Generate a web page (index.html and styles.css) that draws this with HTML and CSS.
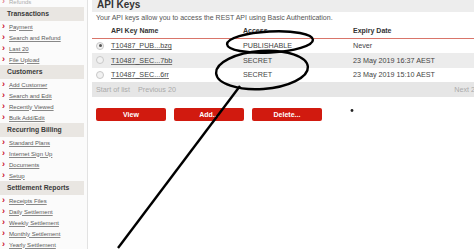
FILE: index.html
```html
<!DOCTYPE html>
<html>
<head>
<meta charset="utf-8">
<link rel="stylesheet" href="styles.css">
</head>
<body>
<div class="page">
  <aside class="sidebar">
    <div class="side-cut"><a class="side-link"><span class="chev">›</span>Refunds</a></div>
    <div class="side-head">Transactions</div>
    <a class="side-link"><span class="chev">›</span><u>Payment</u></a>
    <a class="side-link"><span class="chev">›</span><u>Search and Refund</u></a>
    <a class="side-link"><span class="chev">›</span><u>Last 20</u></a>
    <a class="side-link"><span class="chev">›</span><u>File Upload</u></a>
    <div class="side-head">Customers</div>
    <a class="side-link"><span class="chev">›</span><u>Add Customer</u></a>
    <a class="side-link"><span class="chev">›</span><u>Search and Edit</u></a>
    <a class="side-link"><span class="chev">›</span><u>Recently Viewed</u></a>
    <a class="side-link"><span class="chev">›</span><u>Bulk Add/Edit</u></a>
    <div class="side-head">Recurring Billing</div>
    <a class="side-link"><span class="chev">›</span><u>Standard Plans</u></a>
    <a class="side-link"><span class="chev">›</span><u>Internet Sign Up</u></a>
    <a class="side-link"><span class="chev">›</span><u>Documents</u></a>
    <a class="side-link"><span class="chev">›</span><u>Setup</u></a>
    <div class="side-head">Settlement Reports</div>
    <a class="side-link"><span class="chev">›</span><u>Receipts Files</u></a>
    <a class="side-link"><span class="chev">›</span><u>Daily Settlement</u></a>
    <a class="side-link"><span class="chev">›</span><u>Weekly Settlement</u></a>
    <a class="side-link"><span class="chev">›</span><u>Monthly Settlement</u></a>
    <a class="side-link"><span class="chev">›</span><u>Yearly Settlement</u></a>
  </aside>
  <main class="main">
    <h1 class="title">API Keys</h1>
    <p class="desc">Your API keys allow you to access the REST API using Basic Authentication.</p>
    <div class="table">
      <div class="row head">
        <span class="c-radio"></span>
        <span class="c-name">API Key Name</span>
        <span class="c-access">Access</span>
        <span class="c-exp">Expiry Date</span>
      </div>
      <div class="row">
        <span class="c-radio"><span class="radio on"></span></span>
        <span class="c-name"><u>T10487_PUB...bzg</u></span>
        <span class="c-access">PUBLISHABLE</span>
        <span class="c-exp">Never</span>
      </div>
      <div class="row alt">
        <span class="c-radio"><span class="radio"></span></span>
        <span class="c-name"><u>T10487_SEC...7bb</u></span>
        <span class="c-access">SECRET</span>
        <span class="c-exp">23 May 2019 16:37 AEST</span>
      </div>
      <div class="row">
        <span class="c-radio"><span class="radio"></span></span>
        <span class="c-name"><u>T10487_SEC...6rr</u></span>
        <span class="c-access">SECRET</span>
        <span class="c-exp">23 May 2019 15:10 AEST</span>
      </div>
      <div class="pager">
        <span class="pg-left"><span>Start of list</span><span>Previous 20</span></span>
        <span>Next 20</span>
      </div>
    </div>
    <div class="buttons">
      <button class="btn">View</button>
      <button class="btn">Add...</button>
      <button class="btn">Delete...</button>
    </div>
  </main>
</div>
<svg class="marks" width="474" height="249" viewBox="0 0 474 249">
  <ellipse cx="270" cy="42" rx="43" ry="10.5" fill="none" stroke="#000" stroke-width="2.4" transform="rotate(-3 270 42)"/>
  <ellipse cx="262" cy="70" rx="46" ry="19" fill="none" stroke="#000" stroke-width="2.4" transform="rotate(-4 262 70)"/>
  <line x1="240" y1="86" x2="118" y2="248" stroke="#000" stroke-width="2.4"/>
  <circle cx="352" cy="110.5" r="1.4" fill="#222"/>
</svg>
</body>
</html>
```
FILE: styles.css
```css
html, body {
  margin: 0;
  padding: 0;
  background: #fff;
  overflow: hidden;
}
body {
  width: 474px;
  height: 249px;
  position: relative;
  font-family: "Liberation Sans", Arial, sans-serif;
  color: #444;
}
.page {
  display: flex;
  width: 483px;
}
.sidebar {
  width: 88px;
  flex: none;
  background: #fbfbfb;
  border-right: 1px solid #e2e2e2;
  display: flex;
  flex-direction: column;
  padding-right: 3px;
  box-sizing: border-box;
}
.side-cut {
  height: 7px;
  overflow: hidden;
  display: flex;
  align-items: flex-end;
  opacity: 0.5;
}
.side-head {
  height: 14px;
  line-height: 14px;
  background: #e9e6e2;
  font-weight: bold;
  font-size: 6.8px;
  color: #3a3a3a;
  padding-left: 7px;
}
.side-link {
  display: flex;
  align-items: center;
  height: 11px;
  font-size: 6px;
  color: #5a5a5a;
  white-space: nowrap;
}
.side-link u {
  text-decoration-color: #888;
}
.chev {
  width: 9px;
  flex: none;
  text-align: left;
  padding-left: 2px;
  box-sizing: border-box;
  color: #c8102e;
  font-weight: bold;
  font-size: 9px;
  line-height: 11px;
}
.main {
  flex: 1;
  margin-left: 4px;
  display: flex;
  flex-direction: column;
}
.title {
  margin: 0;
  height: 12px;
  box-sizing: border-box;
  background: #ededed;
  font-size: 10px;
  line-height: 9px;
  font-weight: bold;
  color: #333;
  padding-left: 5px;
}
.desc {
  margin: 0;
  height: 12px;
  line-height: 12px;
  font-size: 7px;
  color: #555;
  padding-left: 4px;
  white-space: nowrap;
}
.table {
  display: flex;
  flex-direction: column;
}
.row {
  display: grid;
  grid-template-columns: 19px 132px 110px 1fr;
  align-items: center;
  height: 14.5px;
  font-size: 7.2px;
  color: #444;
  white-space: nowrap;
}
.row.head {
  height: 13.5px;
  border-bottom: 1px solid #d9756a;
  font-weight: bold;
  font-size: 7px;
  color: #333;
}
.row.alt {
  background: #ececec;
}
.c-radio {
  display: flex;
  padding-left: 4px;
}
.radio {
  width: 6px;
  height: 6px;
  border: 1px solid #c8c8c8;
  border-radius: 50%;
  background: #f2f2f2;
  display: flex;
  align-items: center;
  justify-content: center;
}
.radio.on::after {
  content: "";
  width: 3px;
  height: 3px;
  border-radius: 50%;
  background: #555;
}
.c-name u {
  text-decoration-color: #777;
}
.pager {
  display: flex;
  justify-content: space-between;
  align-items: center;
  height: 15px;
  background: #e6e6e6;
  font-size: 7.2px;
  color: #aaa;
  padding: 0 4px 0 4px;
  white-space: nowrap;
}
.pg-left {
  display: flex;
  gap: 8px;
}
.buttons {
  display: flex;
  gap: 8px;
  margin-top: 11px;
  padding-left: 4px;
}
.btn {
  width: 70px;
  height: 13px;
  padding: 0;
  border: none;
  border-radius: 2px;
  background: #d11a0f;
  color: #fff;
  font-family: "Liberation Sans", Arial, sans-serif;
  font-weight: bold;
  font-size: 7px;
  line-height: 13px;
}
.marks {
  position: absolute;
  left: 0;
  top: 0;
  pointer-events: none;
}
```
